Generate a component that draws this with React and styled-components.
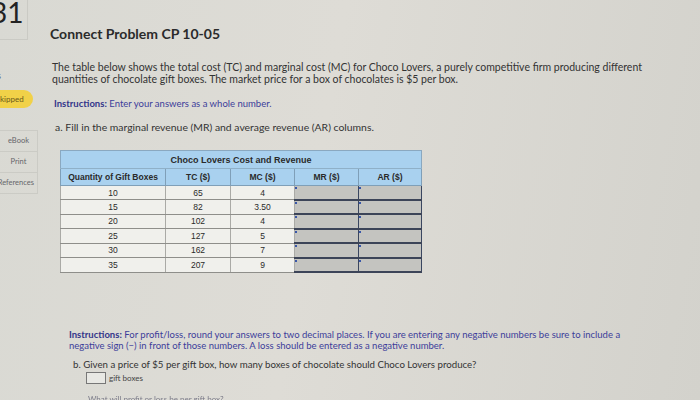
import React from "react";
import styled, { createGlobalStyle } from "styled-components";

const Global = createGlobalStyle`
  html, body { margin: 0; padding: 0; }
  body {
    width: 700px; height: 400px; overflow: hidden;
    background: linear-gradient(100deg, #d9d9d3 0%, #dedcd6 45%, #d3d2cc 100%);
    font-family: Lato, "Open Sans", sans-serif;
    color: #333;
  }
`;

const Page = styled.div`
  display: flex;
  width: 700px;
  height: 400px;
  overflow: hidden;
`;

const Side = styled.div`
  width: 40px;
  flex: none;
  display: flex;
  flex-direction: column;
  align-items: stretch;
  overflow: hidden;
`;

const NumBox = styled.div`
  height: 40px;
  width: 28px;
  box-sizing: border-box;
  border-right: 1px solid #cacac4;
  border-bottom: 1px solid #cacac4;
  overflow: hidden;
  font-size: 28px;
  line-height: 24px;
  color: #222;
  text-indent: -9px;
  white-space: nowrap;
`;

const Cut = styled.div`
  font-size: 9px;
  color: #555;
  margin-top: 30px;
  text-indent: -3px;
`;

const Pill = styled.div`
  margin-top: 9px;
  width: 37px;
  height: 18px;
  margin-left: -4px;
  border-radius: 0 9px 9px 0;
  background: #f1d148;
  color: #6b5a1a;
  font-size: 8px;
  line-height: 18px;
  padding-left: 4px;
  box-sizing: border-box;
  overflow: hidden;
  white-space: nowrap;
`;

const Links = styled.div`
  margin-top: 22px;
  display: flex;
  flex-direction: column;
  margin-right: 2px;
`;

const LinkBox = styled.div`
  height: 20px;
  border: 1px solid #cbcbc5;
  border-left: none;
  border-top: ${(p) => (p.$first ? "1px solid #cbcbc5" : "none")};
  font-size: 7.5px;
  line-height: 20px;
  color: #66666a;
  text-align: ${(p) => p.$align || "center"};
  white-space: nowrap;
  overflow: hidden;
  direction: ${(p) => (p.$rtl ? "rtl" : "ltr")};
  padding-right: ${(p) => (p.$rtl ? "3px" : "0")};
`;

const Main = styled.div`
  flex: 1;
  padding-left: 10px;
  padding-top: 25px;
`;

const Title = styled.h1`
  margin: 0;
  font-size: 14px;
  font-weight: 700;
  color: #2b2b2b;
`;

const Para = styled.p`
  margin: 19px 0 0 2px;
  font-size: 10.5px;
  line-height: 12px;
  width: 610px;
  color: #333;
`;

const Instr = styled.p`
  margin: ${(p) => p.$m || "13px 0 0 4px"};
  font-size: ${(p) => p.$fs || "9.5px"};
  line-height: ${(p) => p.$lh || "11px"};
  color: #3c3d9a;
  width: ${(p) => p.$w || "600px"};
  b { font-weight: 700; color: #33358a; }
`;

const Step = styled.p`
  margin: ${(p) => p.$m || "12px 0 0 5px"};
  font-size: ${(p) => p.$fs || "10.4px"};
  color: #333;
`;

const Table = styled.table`
  margin: 17px 0 0 10px;
  border-collapse: collapse;
  font-family: "Liberation Sans", Arial, sans-serif;
  font-size: 8.5px;
  color: #2a2a2a;
  border: 1px solid #8aa8c0;
`;

const Caption = styled.th`
  background: #a9d1ef;
  height: 17px;
  font-weight: 700;
  font-size: 9px;
  text-align: center;
  padding: 0;
  border-bottom: 1px solid #8fb0c8;
`;

const Head = styled.th`
  background: #a9d1ef;
  height: 16px;
  width: ${(p) => p.$w}px;
  font-weight: 700;
  text-align: center;
  border: 1px solid #7f9fb8;
  padding: 0;
`;

const Cell = styled.td`
  background: #f0f0ec;
  height: 12.5px;
  text-align: center;
  padding: 0;
  border: 1px solid #aaaaa6;
  border-bottom: 1px solid #8e8e8a;
`;

const InputCell = styled.td`
  background: #c4c4c0;
  height: 12.5px;
  padding: 0;
  border: 1px solid #3a4660;
  border-bottom: 2px solid #3c4458;
  position: relative;
  &::before {
    content: "";
    position: absolute;
    left: 0; top: 1px;
    width: 2px; height: 2px;
    background: #3957a8;
  }
`;

const AnswerRow = styled.div`
  display: flex;
  align-items: center;
  gap: 3px;
  margin: 2px 0 0 36px;
  font-size: 8px;
  color: #444;
`;

const Box = styled.div`
  width: 18px;
  height: 10px;
  border: 1px solid #777;
  background: #e8e8e4;
`;

const Faded = styled.p`
  margin: 10px 0 0 38px;
  font-size: 8px;
  color: #7a7a88;
  filter: blur(0.6px);
`;

const rows = [
  [10, 65, "4"],
  [15, 82, "3.50"],
  [20, 102, "4"],
  [25, 127, "5"],
  [30, 162, "7"],
  [35, 207, "9"],
];

export default function App() {
  return (
    <>
      <Global />
      <Page>
        <Side>
          <NumBox>31</NumBox>
          <Cut>s</Cut>
          <Pill>kipped</Pill>
          <Links>
            <LinkBox $first>eBook</LinkBox>
            <LinkBox>Print</LinkBox>
            <LinkBox $align="right" $rtl>References</LinkBox>
          </Links>
        </Side>
        <Main>
          <Title>Connect Problem CP 10-05</Title>
          <Para>
            The table below shows the total cost (TC) and marginal cost (MC) for Choco Lovers, a purely
            competitive firm producing different quantities of chocolate gift boxes. The market price for a
            box of chocolates is $5 per box.
          </Para>
          <Instr>
            <b>Instructions:</b> Enter your answers as a whole number.
          </Instr>
          <Step>a. Fill in the marginal revenue (MR) and average revenue (AR) columns.</Step>
          <Table>
            <thead>
              <tr>
                <Caption colSpan={5}>Choco Lovers Cost and Revenue</Caption>
              </tr>
              <tr>
                <Head $w={104}>Quantity of Gift Boxes</Head>
                <Head $w={64}>TC ($)</Head>
                <Head $w={63}>MC ($)</Head>
                <Head $w={63}>MR ($)</Head>
                <Head $w={62}>AR ($)</Head>
              </tr>
            </thead>
            <tbody>
              {rows.map(([q, tc, mc]) => (
                <tr key={q}>
                  <Cell>{q}</Cell>
                  <Cell>{tc}</Cell>
                  <Cell>{mc}</Cell>
                  <InputCell />
                  <InputCell />
                </tr>
              ))}
            </tbody>
          </Table>
          <Instr $m="56px 0 0 19px" $w="566px" $lh="11px">
            <b>Instructions:</b> For profit/loss, round your answers to two decimal places. If you are entering
            any negative numbers be sure to include a negative sign (−) in front of those numbers. A loss should
            be entered as a negative number.
          </Instr>
          <Step $m="7px 0 0 23px" $fs="9.7px">
            b. Given a price of $5 per gift box, how many boxes of chocolate should Choco Lovers produce?
          </Step>
          <AnswerRow>
            <Box />
            gift boxes
          </AnswerRow>
          <Faded>What will profit or loss be per gift box?</Faded>
        </Main>
      </Page>
    </>
  );
}
